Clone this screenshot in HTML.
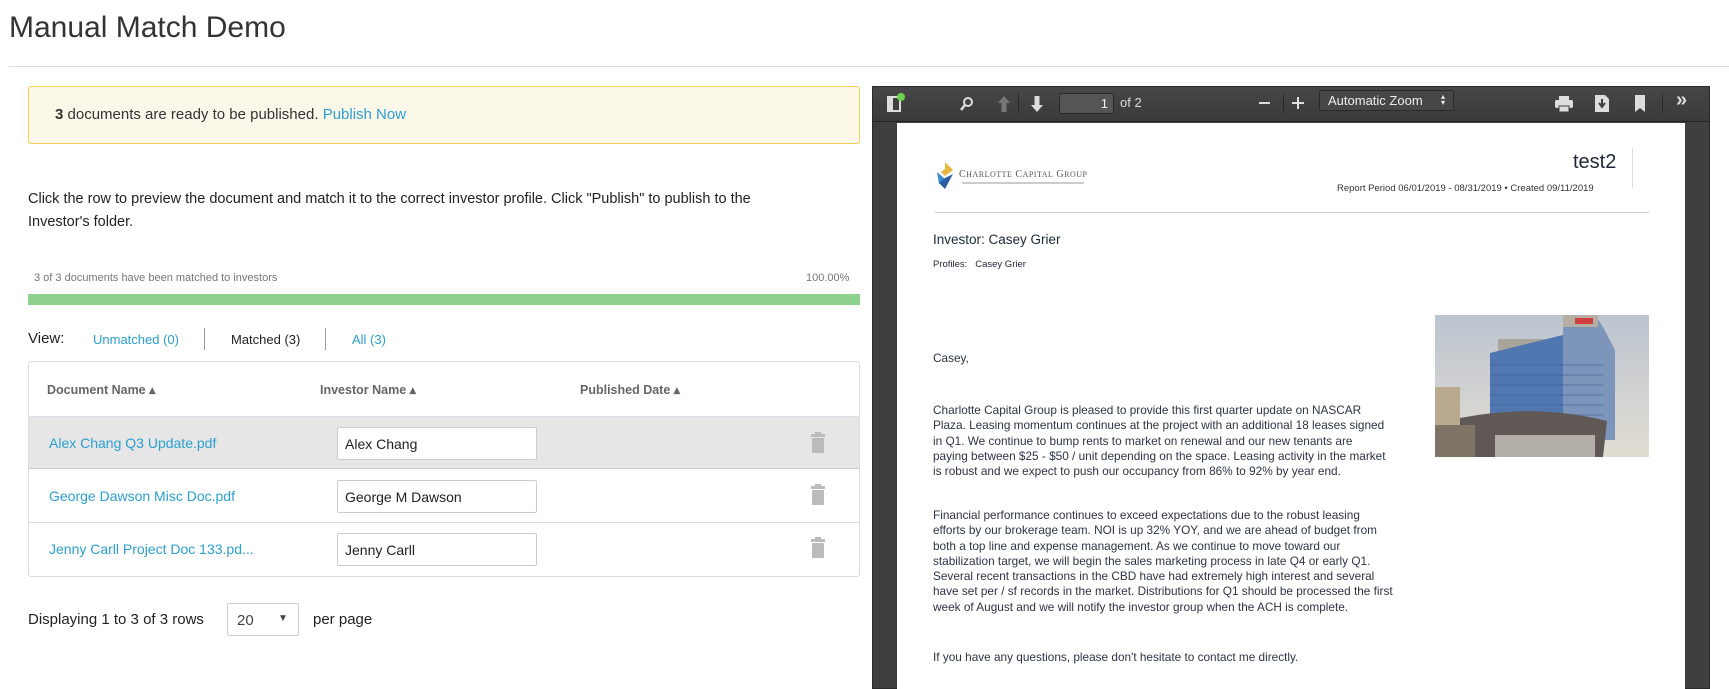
<!DOCTYPE html>
<html><head><meta charset="utf-8"><style>
*{margin:0;padding:0;box-sizing:border-box}
body{width:1729px;height:689px;overflow:hidden;background:#fff;font-family:"Liberation Sans",sans-serif;color:#333;position:relative}
.a{position:absolute;white-space:nowrap}
.link{color:#2a9fd0}
.pl{position:absolute;left:933px;font-size:11.8px;color:#2c3445;white-space:nowrap;line-height:15.3px}
</style></head><body>
<div class="a" style="left:9px;top:11px;font-size:30px;color:#333;font-weight:300">Manual Match Demo</div>
<div class="a" style="left:9px;top:66px;width:1720px;height:1px;background:#ddd"></div>

<div class="a" style="left:28px;top:86px;width:832px;height:58px;background:#fcf8e9;border:1px solid #f2cf57;border-radius:3px"></div>
<div class="a" style="left:55px;top:106px;font-size:15px;color:#333"><b>3</b> documents are ready to be published. <span class="link">Publish Now</span></div>

<div class="a" style="left:28px;top:188px;font-size:14.5px;line-height:23px;color:#222">Click the row to preview the document and match it to the correct investor profile. Click "Publish" to publish to the<br>Investor's folder.</div>

<div class="a" style="left:34px;top:272px;font-size:11px;color:#777">3 of 3 documents have been matched to investors</div>
<div class="a" style="left:806px;top:272px;font-size:11px;color:#777">100.00%</div>
<div class="a" style="left:28px;top:294px;width:832px;height:11px;background:#8fd18f"></div>

<div class="a" style="left:28px;top:330px;font-size:15px;color:#222">View:</div>
<div class="a link" style="left:93px;top:332px;font-size:13px">Unmatched (0)</div>
<div class="a" style="left:204px;top:328px;width:1px;height:22px;background:#999"></div>
<div class="a" style="left:231px;top:332px;font-size:13px;color:#222">Matched (3)</div>
<div class="a" style="left:325px;top:328px;width:1px;height:22px;background:#999"></div>
<div class="a link" style="left:352px;top:332px;font-size:13px">All (3)</div>

<div class="a" style="left:28px;top:361px;width:832px;height:216px;border:1px solid #ddd;border-radius:3px"></div>
<div class="a" style="left:47px;top:382px;font-size:12.5px;color:#666;font-weight:bold">Document Name ▴</div>
<div class="a" style="left:320px;top:382px;font-size:12.5px;color:#666;font-weight:bold">Investor Name ▴</div>
<div class="a" style="left:580px;top:382px;font-size:12.5px;color:#666;font-weight:bold">Published Date ▴</div>
<div class="a" style="left:29px;top:416px;width:830px;height:1px;background:#d5e0ea"></div>
<div class="a" style="left:29px;top:417px;width:830px;height:52px;background:#e6e6e6;border-bottom:1px solid #ccc"></div>
<div class="a" style="left:29px;top:522px;width:830px;height:1px;background:#ddd"></div>

<div class="a link" style="left:49px;top:435px;font-size:14px">Alex Chang Q3 Update.pdf</div>
<div class="a link" style="left:49px;top:488px;font-size:14px">George Dawson Misc Doc.pdf</div>
<div class="a link" style="left:49px;top:541px;font-size:14px">Jenny Carll Project Doc 133.pd...</div>

<div class="a" style="left:337px;top:427px;width:200px;height:33px;background:#fff;border:1px solid #ccc;border-radius:2px;font-size:14px;padding:8px 7px;color:#222">Alex Chang</div>
<div class="a" style="left:337px;top:480px;width:200px;height:33px;background:#fff;border:1px solid #ccc;border-radius:2px;font-size:14px;padding:8px 7px;color:#222">George M Dawson</div>
<div class="a" style="left:337px;top:533px;width:200px;height:33px;background:#fff;border:1px solid #ccc;border-radius:2px;font-size:14px;padding:8px 7px;color:#222">Jenny Carll</div>

<svg class="a" style="left:810px;top:432px" width="16" height="22" viewBox="0 0 16 22"><rect x="1" y="2" width="14" height="3" fill="#bbb"/><rect x="5" y="0" width="6" height="3" fill="#bbb"/><rect x="2" y="6" width="12" height="15" rx="1" fill="#bbb"/></svg>
<svg class="a" style="left:810px;top:484px" width="16" height="22" viewBox="0 0 16 22"><rect x="1" y="2" width="14" height="3" fill="#bbb"/><rect x="5" y="0" width="6" height="3" fill="#bbb"/><rect x="2" y="6" width="12" height="15" rx="1" fill="#bbb"/></svg>
<svg class="a" style="left:810px;top:537px" width="16" height="22" viewBox="0 0 16 22"><rect x="1" y="2" width="14" height="3" fill="#bbb"/><rect x="5" y="0" width="6" height="3" fill="#bbb"/><rect x="2" y="6" width="12" height="15" rx="1" fill="#bbb"/></svg>

<div class="a" style="left:28px;top:611px;font-size:15px;color:#222">Displaying 1 to 3 of 3 rows</div>
<div class="a" style="left:227px;top:603px;width:72px;height:33px;border:1px solid #ccc;border-radius:2px;font-size:15px;padding:8px 9px;color:#444">20<span style="position:absolute;left:50px;top:9px;font-size:10px">▼</span></div>
<div class="a" style="left:313px;top:611px;font-size:15px;color:#222">per page</div>

<!-- PDF viewer -->
<div class="a" style="left:872px;top:86px;width:838px;height:603px;background:#3f3f3f;border:1px solid #2a2a2a"></div>
<div class="a" style="left:873px;top:87px;width:836px;height:35px;background:linear-gradient(#474747,#3a3a3a);border-bottom:1px solid #252525"></div>
<svg class="a" style="left:886px;top:92px" width="22" height="22" viewBox="0 0 22 22"><rect x="2" y="5" width="12" height="14" fill="none" stroke="#ddd" stroke-width="2"/><rect x="2" y="5" width="5" height="14" fill="#ddd"/><circle cx="15" cy="5" r="4" fill="#6ed24a"/></svg>
<svg class="a" style="left:959px;top:96px" width="16" height="16" viewBox="0 0 16 16"><circle cx="9" cy="6" r="4" fill="none" stroke="#ddd" stroke-width="2"/><path d="M6 9 L2 14" stroke="#ddd" stroke-width="2.5"/></svg>
<svg class="a" style="left:997px;top:95px" width="14" height="18" viewBox="0 0 14 18"><path d="M7 1 L1 8 H4.5 V17 H9.5 V8 H13 Z" fill="#777"/></svg>
<div class="a" style="left:1018px;top:93px;width:1px;height:20px;background:#2a2a2a"></div>
<svg class="a" style="left:1030px;top:95px" width="14" height="18" viewBox="0 0 14 18"><path d="M7 17 L1 10 H4.5 V1 H9.5 V10 H13 Z" fill="#ddd"/></svg>
<div class="a" style="left:1059px;top:93px;width:55px;height:21px;background:#555;border:1px solid #2a2a2a;border-radius:2px;color:#eee;font-size:13px;text-align:right;padding:2px 5px">1</div>
<div class="a" style="left:1120px;top:95px;font-size:13px;color:#ddd">of 2</div>
<div class="a" style="left:1259px;top:102px;width:11px;height:2px;background:#ddd"></div>
<div class="a" style="left:1283px;top:93px;width:1px;height:20px;background:#2a2a2a"></div>
<div class="a" style="left:1292px;top:102px;width:12px;height:2px;background:#ddd"></div>
<div class="a" style="left:1297px;top:97px;width:2px;height:12px;background:#ddd"></div>
<div class="a" style="left:1319px;top:90px;width:135px;height:21px;background:#474747;border:1px solid #2a2a2a;border-radius:2px;color:#eee;font-size:13px;padding:2px 8px">Automatic Zoom <span style="position:absolute;right:8px;top:3px;font-size:8px;line-height:6px">▴<br>▾</span></div>
<svg class="a" style="left:1555px;top:96px" width="18" height="16" viewBox="0 0 18 16"><rect x="4" y="0" width="10" height="4" fill="#ddd"/><rect x="0" y="4" width="18" height="8" rx="2" fill="#ddd"/><rect x="4" y="10" width="10" height="6" fill="#ddd" stroke="#3f3f3f"/></svg>
<svg class="a" style="left:1595px;top:95px" width="14" height="17" viewBox="0 0 14 17"><path d="M0 0 H10 L14 4 V17 H0 Z" fill="#ddd"/><path d="M7 4 V11 M4 8 L7 12 L10 8" stroke="#3f3f3f" stroke-width="2" fill="none"/></svg>
<svg class="a" style="left:1635px;top:95px" width="10" height="17" viewBox="0 0 10 17"><path d="M0 0 H10 V17 L5 13 L0 17 Z" fill="#ddd"/></svg>
<div class="a" style="left:1662px;top:93px;width:1px;height:20px;background:#2a2a2a"></div>
<div class="a" style="left:1676px;top:89px;font-size:20px;color:#ddd;font-weight:bold">»</div>

<div class="a" style="left:897px;top:123px;width:788px;height:566px;background:#fff"></div>
<!-- logo -->
<svg class="a" style="left:935px;top:162px" width="20" height="28" viewBox="0 0 20 28"><path d="M10 0 L18 8 L10 14 L6 10 L10 7 Z" fill="#e8b640"/><path d="M2 10 L10 17 L4 22 Z" fill="#3a8fd0"/><path d="M10 16 L18 12 L10 27 L4 21 Z" fill="#2b5fa0"/></svg>
<div class="a" style="left:959px;top:169px;font-family:'Liberation Serif',serif;font-size:10px;color:#555;letter-spacing:.5px">C<span style="font-size:8px">HARLOTTE</span> C<span style="font-size:8px">APITAL</span> G<span style="font-size:8px">ROUP</span></div>
<div class="a" style="left:962px;top:182px;width:122px;height:2px;background:#ccc"></div>
<div class="a" style="left:1573px;top:151px;font-size:20px;color:#1d2838">test2</div>
<div class="a" style="left:1632px;top:148px;width:1px;height:40px;background:#ddd"></div>
<div class="a" style="left:1337px;top:183px;font-size:9.5px;color:#333">Report Period 06/01/2019 - 08/31/2019 • Created 09/11/2019</div>
<div class="a" style="left:935px;top:212px;width:714px;height:1px;background:#ccc"></div>
<div class="a" style="left:933px;top:232px;font-size:13.5px;color:#1d2838">Investor: Casey Grier</div>
<div class="a" style="left:933px;top:259px;font-size:9.5px;color:#1d2838">Profiles:&nbsp;&nbsp; Casey Grier</div>

<svg class="a" style="left:1435px;top:315px" width="214" height="142" viewBox="0 0 214 142">
<defs><linearGradient id="sk" x1="0" y1="0" x2="0" y2="1"><stop offset="0" stop-color="#bcc4d0"/><stop offset="1" stop-color="#e2ddd2"/></linearGradient></defs>
<rect width="214" height="142" fill="url(#sk)"/>
<rect x="63" y="24" width="100" height="26" fill="#a9a59c"/>
<path d="M55 38 L128 20 L168 22 L168 120 L55 120 Z" fill="#5077b0"/>
<path d="M128 10 L160 0 L168 12 L180 35 L180 125 L128 125 Z" fill="#7d95bb"/>
<rect x="128" y="0" width="35" height="12" fill="#b5aea2"/>
<rect x="140" y="3" width="18" height="6" fill="#d04040"/>
<g stroke="#3c5e93" stroke-width="1" opacity=".6"><path d="M55 50H168M55 60H168M55 70H168M55 80H168M55 90H168M55 100H168"/></g>
<rect x="0" y="72" width="25" height="70" fill="#b9a98e"/>
<path d="M25 103 Q100 88 172 106 L168 142 L25 142 Z" fill="#5f5854"/>
<rect x="60" y="120" width="100" height="22" fill="#b3afa8"/>
<rect x="0" y="110" width="40" height="32" fill="#7f7566"/>
</svg>

<div class="pl" style="top:351px">Casey,</div>
<div class="pl" style="top:403px">Charlotte Capital Group is pleased to provide this first quarter update on NASCAR<br>Plaza. Leasing momentum continues at the project with an additional 18 leases signed<br>in Q1. We continue to bump rents to market on renewal and our new tenants are<br>paying between $25 - $50 / unit depending on the space. Leasing activity in the market<br>is robust and we expect to push our occupancy from 86% to 92% by year end.</div>
<div class="pl" style="top:508px">Financial performance continues to exceed expectations due to the robust leasing<br>efforts by our brokerage team. NOI is up 32% YOY, and we are ahead of budget from<br>both a top line and expense management. As we continue to move toward our<br>stabilization target, we will begin the sales marketing process in late Q4 or early Q1.<br>Several recent transactions in the CBD have had extremely high interest and several<br>have set per / sf records in the market. Distributions for Q1 should be processed the first<br>week of August and we will notify the investor group when the ACH is complete.</div>
<div class="pl" style="top:650px">If you have any questions, please don't hesitate to contact me directly.</div>
</body></html>
